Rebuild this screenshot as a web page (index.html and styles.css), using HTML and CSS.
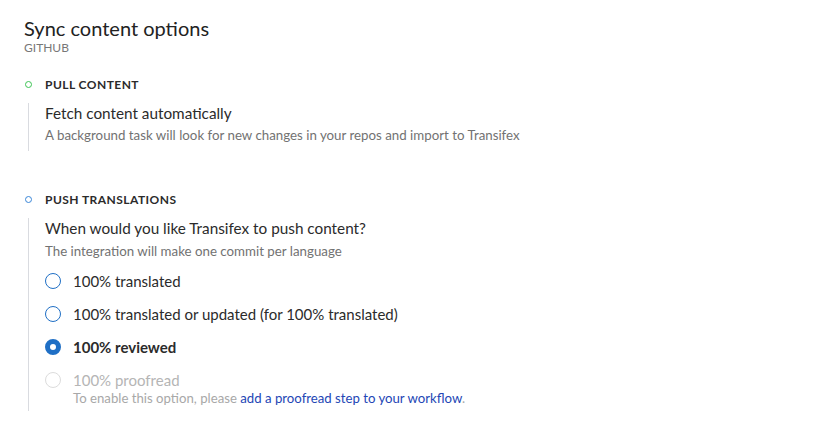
FILE: index.html
```html
<!DOCTYPE html>
<html lang="en">
<head>
  <meta charset="UTF-8" />
  <meta name="viewport" content="width=device-width, initial-scale=1.0" />
  <title>Sync content options</title>
  <link rel="stylesheet" href="styles.css">
</head>
<body>
  <!-- ============================
       Sync options panel
       ============================ -->
  <div class="sync-panel">
    <h1 class="sync-title">Sync content options</h1>
    <div class="sync-subtitle">GITHUB</div>

    <!-- Pull content -->
    <section class="step">
      <div class="step-head">
        <span class="dot dot-green"></span>
        <span class="step-label">PULL CONTENT</span>
      </div>
      <div class="step-body">
        <div class="step-question">Fetch content automatically</div>
        <div class="step-help">A background task will look for new changes in your repos and import to Transifex</div>
      </div>
    </section>

    <!-- Push translations -->
    <section class="step step-push">
      <div class="step-head">
        <span class="dot dot-blue"></span>
        <span class="step-label">PUSH TRANSLATIONS</span>
      </div>
      <div class="step-body">
        <div class="step-question">When would you like Transifex to push content?</div>
        <div class="step-help">The integration will make one commit per language</div>

        <ul class="options">
          <li class="option">
            <span class="radio"></span>
            <span class="option-label">100% translated</span>
          </li>
          <li class="option">
            <span class="radio"></span>
            <span class="option-label">100% translated or updated (for 100% translated)</span>
          </li>
          <li class="option checked">
            <span class="radio"></span>
            <span class="option-label">100% reviewed</span>
          </li>
          <li class="option disabled">
            <span class="radio"></span>
            <div>
              <span class="option-label">100% proofread</span>
              <div class="option-hint">To enable this option, please <a href="#">add a proofread step to your workflow</a>.</div>
            </div>
          </li>
        </ul>
      </div>
    </section>
  </div>
</body>
</html>
```

FILE: styles.css
```css
/* ============================
   Basic Reset
   ============================ */
* {
  margin: 0;
  padding: 0;
  box-sizing: border-box;
}

body {
  font-family: Lato, "Open Sans", sans-serif;
  color: #2b2b2b;
  background: #ffffff;
}

/* ============================
   Panel
   ============================ */
.sync-panel {
  padding: 15px 24px 0;
}

.sync-title {
  font-size: 20px;
  font-weight: 400;
  line-height: 26px;
  color: #222;
}

.sync-subtitle {
  font-size: 12px;
  line-height: 14px;
  color: #777;
}

/* ============================
   Steps
   ============================ */
.step {
  margin-top: 20px;
}

.step-push {
  margin-top: 39px;
}

.step-head {
  display: flex;
  align-items: center;
  height: 18px;
}

.dot {
  width: 7px;
  height: 7px;
  border-radius: 50%;
  border: 1px solid;
  margin: 0 13px 0 1px;
}

.dot-green {
  border-color: #3cc454;
}

.dot-blue {
  border-color: #3a86d8;
}

.step-label {
  font-size: 12px;
  font-weight: 700;
  letter-spacing: 0.45px;
  color: #2b2b2b;
}

.step-body {
  margin: 10px 0 0 4px;
  border-left: 1px solid #d9dbe0;
  padding: 0 0 8px 16px;
}

.step-question {
  font-size: 15.3px;
  line-height: 20px;
  color: #2b2b2b;
}

.step-help {
  font-size: 13.3px;
  line-height: 16px;
  margin-top: 4px;
  color: #727272;
}

.step-push .step-help {
  margin-top: 5px;
}

.step-push .step-body {
  padding-bottom: 6px;
}

/* ============================
   Radio options
   ============================ */
.options {
  list-style: none;
  margin-top: 12px;
}

.option {
  display: flex;
  align-items: flex-start;
  gap: 12px;
  margin-bottom: 13px;
}

.option:last-child {
  margin-bottom: 0;
}

.radio {
  flex: none;
  width: 16px;
  height: 16px;
  margin-top: 2px;
  border-radius: 50%;
  border: 1.5px solid #1f6fc5;
  background: #fff;
}

.option.checked .radio {
  border: 5.5px solid #1f6fc5;
}

.option.checked .option-label {
  font-weight: 700;
}

.option-label {
  font-size: 15px;
  line-height: 20px;
}

.option.disabled .radio {
  border-color: #dcdcdc;
}

.option.disabled .option-label {
  color: #b5b5b5;
}

.option-hint {
  font-size: 13.2px;
  line-height: 14px;
  margin-top: 1px;
  color: #a8a8a8;
}

.option-hint a {
  color: #2346b5;
  text-decoration: none;
}
```
